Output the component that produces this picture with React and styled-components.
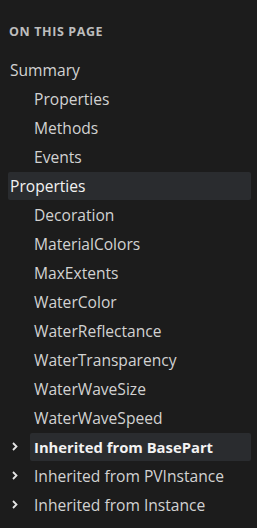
import React from 'react'
import styled, { createGlobalStyle } from 'styled-components'

const Global = createGlobalStyle`
  html, body {
    margin: 0;
    background: #1c1c1c;
  }
  body {
    font-family: "Open Sans", Lato, sans-serif;
  }
`

const Nav = styled.nav`
  width: 257px;
  height: 528px;
  box-sizing: border-box;
  padding: 24px 6px 0 8px;
  background: #1c1c1c;
`

const Heading = styled.h4`
  margin: 0 0 15px 1px;
  height: 16px;
  line-height: 16px;
  font-size: 12.5px;
  font-weight: 700;
  letter-spacing: 0.6px;
  color: #bdbdbd;
  text-transform: uppercase;
`

const List = styled.ul`
  list-style: none;
  margin: 0;
  padding: 0;
`

const Row = styled.li`
  display: flex;
  align-items: center;
  height: 29px;
  position: relative;
`

const Link = styled.a`
  display: flex;
  align-items: center;
  height: 28px;
  flex: 1;
  margin-left: ${p => (p.$depth ? '22px' : '0')};
  padding-left: ${p => (p.$depth ? '4px' : '2px')};
  border-radius: 2px;
  background: ${p => (p.$active ? '#2a2c2f' : 'transparent')};
  color: ${p => (p.$active ? '#f2f2f2' : '#d2d2d2')};
  font-size: ${p => (p.$bold ? '14.8px' : '15.6px')};
  font-weight: ${p => (p.$bold ? 700 : 400)};
  white-space: nowrap;
  cursor: pointer;
`

const Chevron = styled.svg`
  position: absolute;
  left: 3px;
  top: 10px;
  width: 8px;
  height: 9px;
`

const items = [
  { label: 'Summary' },
  { label: 'Properties', depth: 1 },
  { label: 'Methods', depth: 1 },
  { label: 'Events', depth: 1 },
  { label: 'Properties', active: true },
  { label: 'Decoration', depth: 1 },
  { label: 'MaterialColors', depth: 1 },
  { label: 'MaxExtents', depth: 1 },
  { label: 'WaterColor', depth: 1 },
  { label: 'WaterReflectance', depth: 1 },
  { label: 'WaterTransparency', depth: 1 },
  { label: 'WaterWaveSize', depth: 1 },
  { label: 'WaterWaveSpeed', depth: 1 },
  { label: 'Inherited from BasePart', depth: 1, active: true, bold: true, chevron: true },
  { label: 'Inherited from PVInstance', depth: 1, chevron: true },
  { label: 'Inherited from Instance', depth: 1, chevron: true },
]

export default function App() {
  return (
    <>
      <Global />
      <Nav>
        <Heading>On this page</Heading>
        <List>
          {items.map((it, i) => (
            <Row key={i}>
              {it.chevron && (
                <Chevron viewBox="0 0 8 9">
                  <path d="M2 1l3.5 3.5L2 8" fill="none" stroke="#e6e6e6" strokeWidth="1.8" />
                </Chevron>
              )}
              <Link $depth={it.depth} $active={it.active} $bold={it.bold}>
                {it.label}
              </Link>
            </Row>
          ))}
        </List>
      </Nav>
    </>
  )
}
